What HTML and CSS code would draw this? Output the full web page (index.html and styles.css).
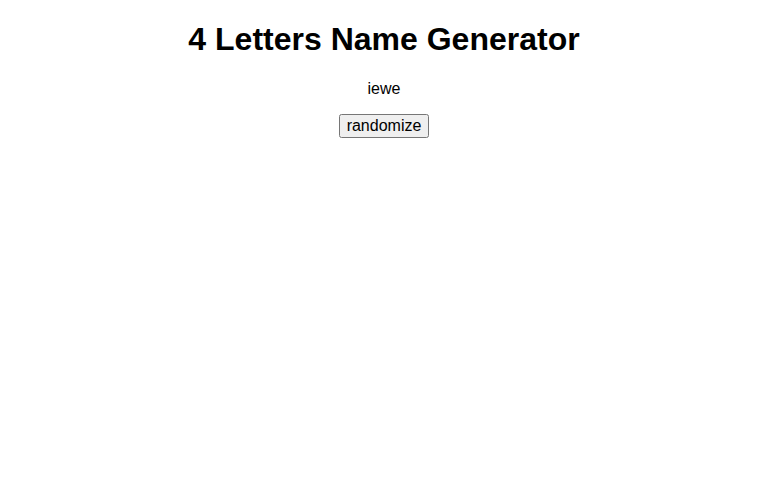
FILE: index.html
```html
<!DOCTYPE html>
<html>
<head>
<meta charset="utf-8">
<link rel="stylesheet" href="styles.css">
</head>
<body>
<div class="app">
  <h1 class="title">4 Letters Name Generator</h1>
  <p class="name">iewe</p>
  <div class="actions"><button class="btn">randomize</button></div>
</div>
</body>
</html>
```
FILE: styles.css
```css
body {
  margin: 0;
  font-family: "Liberation Sans", Arial, sans-serif;
  color: #000;
  background: #fff;
}
.app {
  text-align: center;
  padding: 0 8px;
}
.title {
  font-size: 32px;
  margin: 21.44px 0;
}
.name {
  font-size: 16px;
  margin: 16px 0;
}
.btn {
  font-family: "Liberation Sans", Arial, sans-serif;
  font-size: 16px;
}
```
